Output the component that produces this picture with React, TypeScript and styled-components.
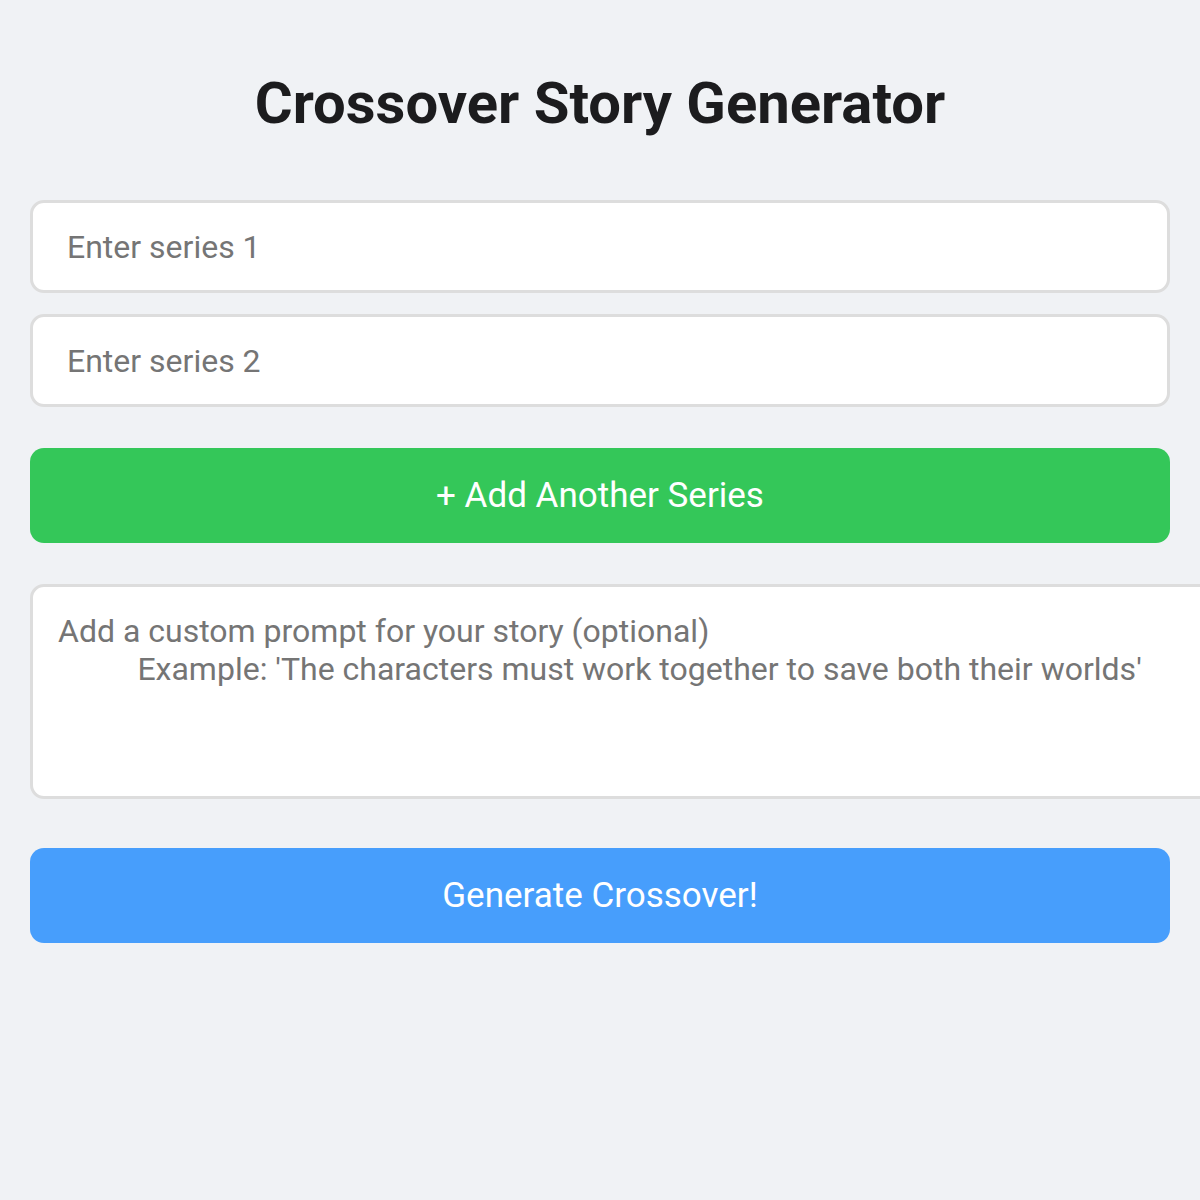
import React from "react";
import styled, { createGlobalStyle } from "styled-components";

const GlobalStyle = createGlobalStyle`
  body {
    margin: 0;
    background: #f0f2f5;
    font-family: Roboto, "Liberation Sans", sans-serif;
    overflow-x: hidden;
  }
`;

const Page = styled.main`
  padding: 0 30px;
  display: flex;
  flex-direction: column;
`;

const Title = styled.h1`
  margin: 70px 0 64px;
  text-align: center;
  font-size: 58px;
  line-height: 66px;
  font-weight: 700;
  color: #1c1c1e;
`;

const SeriesList = styled.div`
  display: flex;
  flex-direction: column;
  gap: 21px;
`;

const Field = styled.input`
  box-sizing: border-box;
  width: 100%;
  height: 93px;
  padding: 0 34px;
  border: 3px solid #dddddd;
  border-radius: 14px;
  background: #fff;
  font-family: inherit;
  font-size: 32px;
  color: #1c1c1e;
  outline: none;

  &::placeholder {
    color: #757575;
  }
`;

const Button = styled.button<{ $tone: "green" | "blue" }>`
  box-sizing: border-box;
  width: 100%;
  height: 95px;
  border: none;
  border-radius: 14px;
  background: ${(p) => (p.$tone === "green" ? "#34c759" : "#479efc")};
  color: #fff;
  font-family: inherit;
  font-size: 35px;
  cursor: pointer;
`;

const AddButton = styled(Button)`
  margin-top: 41px;
`;

const GenerateButton = styled(Button)`
  margin-top: 49px;
`;

const Prompt = styled.textarea`
  display: block;
  width: 100%;
  height: 159px;
  margin-top: 41px;
  padding: 25px 25px;
  border: 3px solid #dddddd;
  border-radius: 14px;
  background: #fff;
  font-family: inherit;
  font-size: 32px;
  line-height: 38px;
  color: #1c1c1e;
  resize: none;
  outline: none;

  &::placeholder {
    color: #757575;
  }
`;

const promptHint = `Add a custom prompt for your story (optional)
          Example: 'The characters must work together to save both their worlds'`;

const App = () => {
  return (
    <>
      <GlobalStyle />
      <Page>
        <Title>Crossover Story Generator</Title>
        <SeriesList>
          <Field placeholder="Enter series 1" />
          <Field placeholder="Enter series 2" />
        </SeriesList>
        <AddButton $tone="green">+ Add Another Series</AddButton>
        <div>
          <Prompt placeholder={promptHint} />
        </div>
        <GenerateButton $tone="blue">Generate Crossover!</GenerateButton>
      </Page>
    </>
  );
};

export default App;
